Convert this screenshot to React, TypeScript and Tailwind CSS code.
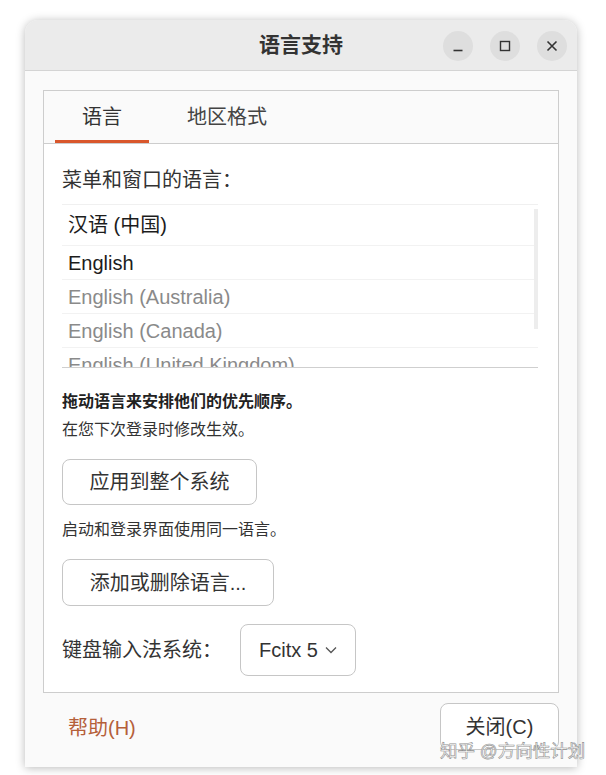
import React from 'react'

const font = { fontFamily: '"Liberation Sans", "Noto Sans CJK SC", sans-serif' }

const languages = [
  { label: '汉语 (中国)', active: true },
  { label: 'English', active: true },
  { label: 'English (Australia)', active: false },
  { label: 'English (Canada)', active: false },
  { label: 'English (United Kingdom)', active: false },
]

function TitleButton({ children }: { children: React.ReactNode }) {
  return (
    <div className="flex h-[30px] w-[30px] items-center justify-center rounded-full bg-[#dedede]">
      {children}
    </div>
  )
}

export default function App() {
  return (
    <div className="h-[775px] w-[606px] overflow-hidden bg-white pl-[25px] pt-[20px]" style={font}>
      <div className="relative flex h-[747px] w-[552px] flex-col rounded-t-[13px] bg-[#fafafa] shadow-[0_1px_10px_rgba(0,0,0,0.28)]">
        {/* Header bar */}
        <div className="relative flex h-[51px] shrink-0 items-center justify-center rounded-t-[13px] border-b border-[#d4d4d4] bg-[#ebebeb]">
          <span className="text-[21px] font-bold text-[#333]">语言支持</span>
          <div className="absolute right-[10px] top-[11px] flex gap-[17px]">
            <TitleButton>
              <svg width="12" height="12" viewBox="0 0 12 12">
                <path d="M1.5 10.5h9" stroke="#333" strokeWidth="1.6" />
              </svg>
            </TitleButton>
            <TitleButton>
              <svg width="12" height="12" viewBox="0 0 12 12">
                <rect x="1.5" y="1.5" width="9" height="9" fill="none" stroke="#333" strokeWidth="1.4" />
              </svg>
            </TitleButton>
            <TitleButton>
              <svg width="12" height="12" viewBox="0 0 12 12">
                <path d="M1.5 1.5l9 9M10.5 1.5l-9 9" stroke="#333" strokeWidth="1.6" />
              </svg>
            </TitleButton>
          </div>
        </div>

        {/* Notebook frame */}
        <div className="mx-[18px] mt-[19px] flex h-[603px] flex-col border border-[#cdcdcd] bg-white">
          <div className="flex h-[53px] shrink-0 items-stretch border-b border-[#cdcdcd] bg-[#fafafa] pl-[11px]">
            <div className="relative flex w-[94px] items-center justify-center text-[20px] text-[#333]">
              语言
              <div className="absolute bottom-0 left-0 right-0 h-[3px] bg-[#d9572c]" />
            </div>
            <div className="ml-[38px] flex items-center text-[20px] text-[#444]">地区格式</div>
          </div>

          <div className="flex flex-1 flex-col pl-[18px] pr-[20px] pt-[22px]">
            <div className="text-[20px] leading-[28px] text-[#333]">菜单和窗口的语言：</div>

            <div className="relative mt-[10px] h-[164px] overflow-hidden border-b border-t border-b-[#cfcfcf] border-t-[#f0f0f0]">
              {languages.map((lang, i) => (
                <div
                  key={lang.label}
                  className={`flex items-center border-b border-[#f2f2f2] pl-[6px] text-[20px] ${
                    i === 0 ? 'h-[41px]' : 'h-[34px]'
                  } ${lang.active ? 'text-[#1c1c1c]' : 'text-[#8a8a8a]'}`}
                >
                  {lang.label}
                </div>
              ))}
              <div className="absolute right-0 top-[4px] h-[120px] w-[4px] bg-[#ededed]" />
            </div>

            <div className="mt-[20px] text-[16px] font-bold leading-[28px] text-[#222]">
              拖动语言来安排他们的优先顺序。
            </div>
            <div className="text-[16px] leading-[28px] text-[#333]">在您下次登录时修改生效。</div>

            <button className="mt-[15px] flex h-[46px] w-[195px] items-center justify-center rounded-[8px] border border-[#c6c6c6] bg-white text-[20px] text-[#333]">
              应用到整个系统
            </button>

            <div className="mt-[11px] text-[16px] leading-[28px] text-[#333]">启动和登录界面使用同一语言。</div>

            <button className="mt-[15px] flex h-[47px] w-[212px] items-center justify-center rounded-[8px] border border-[#c6c6c6] bg-white text-[20px] text-[#333]">
              添加或删除语言...
            </button>

            <div className="mt-[18px] flex items-center">
              <span className="w-[178px] text-[20px] text-[#333]">键盘输入法系统：</span>
              <button className="flex h-[52px] w-[116px] items-center justify-center gap-[7px] rounded-[8px] border border-[#c6c6c6] bg-white text-[20px] text-[#333]">
                Fcitx 5
                <svg width="12" height="8" viewBox="0 0 12 8">
                  <path d="M1 1.5l5 5 5-5" fill="none" stroke="#555" strokeWidth="1.3" />
                </svg>
              </button>
            </div>
          </div>
        </div>

        {/* Footer */}
        <div className="mx-[18px] mt-[10px] flex items-start justify-between">
          <span className="ml-[25px] mt-[10px] text-[20px] text-[#b5603a]">帮助(H)</span>
          <button className="flex h-[47px] w-[119px] items-center justify-center rounded-[8px] border border-[#c6c6c6] bg-white text-[20px] text-[#333]">
            关闭(C)
          </button>
        </div>

        {/* Watermark */}
        <div className="absolute left-[415px] top-[718px] whitespace-nowrap text-[17.5px] text-white [-webkit-text-stroke:0.6px_#8f8f8f]">
          知乎 @方向性计划
        </div>
      </div>
    </div>
  )
}
